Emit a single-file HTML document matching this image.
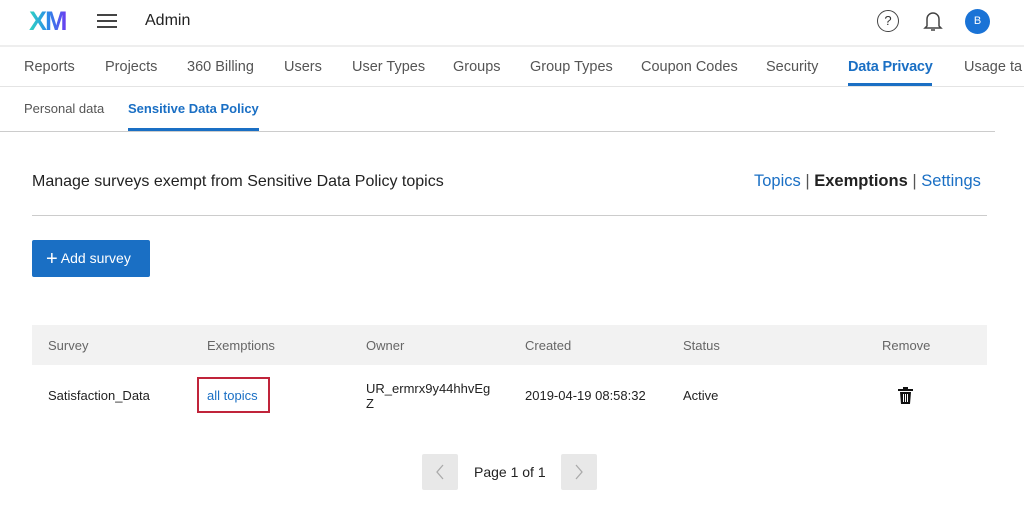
<!DOCTYPE html>
<html><head><style>
*{margin:0;padding:0;box-sizing:border-box}
body{width:1024px;height:510px;overflow:hidden;background:#fff;font-family:"Liberation Sans",sans-serif;color:#222;position:relative}
.a{position:absolute;white-space:nowrap}
.tab{font-size:14.5px;color:#555;top:59px}
.col{font-size:13px;color:#666;top:338px}
.cell{font-size:13px;color:#222}
</style></head><body>
<div class="a" style="left:29px;top:6px;font-size:27px;font-weight:bold;letter-spacing:-2px;background:linear-gradient(90deg,#2fd6c0,#2a8be8 50%,#6a3ef0);-webkit-background-clip:text;color:transparent">XM</div>
<div class="a" style="left:97px;top:14px;width:20px;height:2px;background:#444;box-shadow:0 6px 0 #444,0 12px 0 #444"></div>
<div class="a" style="left:145px;top:12px;font-size:16px;color:#222">Admin</div>
<div class="a" style="left:877px;top:10px;width:22px;height:22px;border:1.5px solid #444;border-radius:50%;font-size:13px;text-align:center;line-height:19px;color:#333">?</div>
<svg class="a" style="left:922px;top:9px" width="22" height="24" viewBox="0 0 22 24"><path d="M5 17V10a6 6 0 0 1 12 0v7l2 2H3z" fill="none" stroke="#444" stroke-width="1.5"/><path d="M9 21h4" stroke="#444" stroke-width="1.5"/></svg>
<div class="a" style="left:965px;top:9px;width:25px;height:25px;border-radius:50%;background:#1a73d6;color:#fff;font-size:11px;text-align:center;line-height:25px">B</div>
<div class="a" style="left:0;top:45px;width:1024px;height:2px;background:#eee"></div>
<div class="a tab" style="left:24px">Reports</div>
<div class="a tab" style="left:105px">Projects</div>
<div class="a tab" style="left:187px">360 Billing</div>
<div class="a tab" style="left:284px">Users</div>
<div class="a tab" style="left:352px">User Types</div>
<div class="a tab" style="left:453px">Groups</div>
<div class="a tab" style="left:530px">Group Types</div>
<div class="a tab" style="left:641px">Coupon Codes</div>
<div class="a tab" style="left:766px">Security</div>
<div class="a tab" style="left:848px;color:#1a6fc4;font-weight:bold;letter-spacing:-0.2px">Data Privacy</div>
<div class="a tab" style="left:964px">Usage ta</div>
<div class="a" style="left:848px;top:83px;width:84px;height:3px;background:#1a6fc4"></div>
<div class="a" style="left:0;top:86px;width:1024px;height:1px;background:#e4e4e4"></div>
<div class="a" style="left:24px;top:101px;font-size:13px;color:#555">Personal data</div>
<div class="a" style="left:128px;top:101px;font-size:13px;color:#1a6fc4;font-weight:bold">Sensitive Data Policy</div>
<div class="a" style="left:128px;top:128px;width:131px;height:3px;background:#1a6fc4"></div>
<div class="a" style="left:0;top:131px;width:995px;height:1px;background:#ccc"></div>
<div class="a" style="left:32px;top:173px;font-size:16px">Manage surveys exempt from Sensitive Data Policy topics</div>
<div class="a" style="left:754px;top:172px;font-size:16.5px;color:#1a6fc4">Topics <span style="color:#555">|</span> <b style="color:#222">Exemptions</b> <span style="color:#555">|</span> Settings</div>
<div class="a" style="left:32px;top:215px;width:955px;height:1px;background:#ccc"></div>
<div class="a" style="left:32px;top:240px;width:118px;height:37px;background:#1a6fc4;border-radius:2px;color:#fff;font-size:14px;line-height:37px;padding-left:14px"><span style="font-size:20px;vertical-align:-2px">+</span> Add survey</div>
<div class="a" style="left:32px;top:325px;width:955px;height:40px;background:#f2f2f2"></div>
<div class="a col" style="left:48px">Survey</div>
<div class="a col" style="left:207px">Exemptions</div>
<div class="a col" style="left:366px">Owner</div>
<div class="a col" style="left:525px">Created</div>
<div class="a col" style="left:683px">Status</div>
<div class="a col" style="left:882px">Remove</div>
<div class="a cell" style="left:48px;top:388px">Satisfaction_Data</div>
<div class="a" style="left:197px;top:377px;width:73px;height:36px;border:2px solid #c0243a"></div>
<div class="a cell" style="left:207px;top:388px;color:#1a6fc4">all topics</div>
<div class="a cell" style="left:366px;top:381px;line-height:15px">UR_ermrx9y44hhvEg<br>Z</div>
<div class="a cell" style="left:525px;top:388px">2019-04-19 08:58:32</div>
<div class="a cell" style="left:683px;top:388px">Active</div>
<svg class="a" style="left:898px;top:387px" width="15" height="17" viewBox="0 0 15 17"><rect x="0" y="2" width="15" height="2" fill="#111"/><rect x="5" y="0" width="5" height="2" fill="#111"/><path d="M2 5h11l-1 12H3z" fill="#111"/><path d="M5.5 7v8M7.5 7v8M9.5 7v8" stroke="#fff" stroke-width="1"/></svg>
<div class="a" style="left:422px;top:454px;width:36px;height:36px;background:#e8e8e8;border-radius:2px"></div>
<svg class="a" style="left:434px;top:464px" width="12" height="16"><path d="M9 1L3 8l6 7" fill="none" stroke="#aaa" stroke-width="1.3"/></svg>
<div class="a" style="left:474px;top:464px;font-size:14px">Page 1 of 1</div>
<div class="a" style="left:561px;top:454px;width:36px;height:36px;background:#e8e8e8;border-radius:2px"></div>
<svg class="a" style="left:573px;top:464px" width="12" height="16"><path d="M3 1l6 7-6 7" fill="none" stroke="#aaa" stroke-width="1.3"/></svg>
</body></html>
